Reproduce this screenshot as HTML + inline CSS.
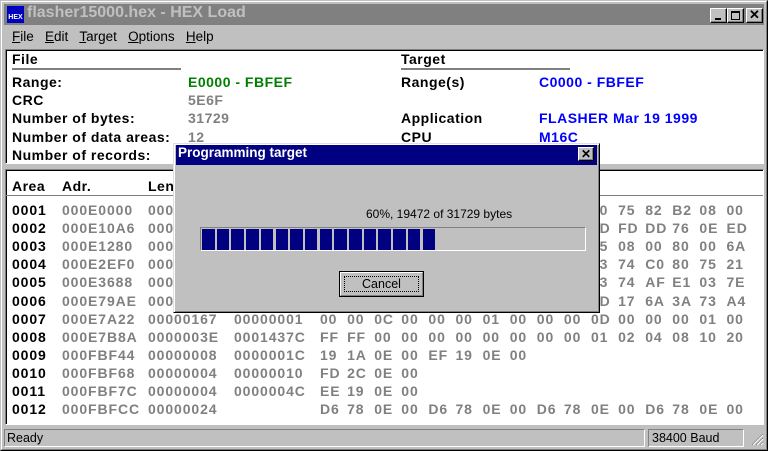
<!DOCTYPE html>
<html><head><meta charset="utf-8">
<style>
*{margin:0;padding:0;box-sizing:border-box}
body{width:768px;height:451px;background:#c0c0c0;font-family:"Liberation Sans",Arial,sans-serif;position:relative;overflow:hidden}
.a{position:absolute;white-space:nowrap}
.b{font-weight:bold;font-size:14px;letter-spacing:0.5px}
.g{color:#808080}
.gr{color:#008000}
.bl{color:#0000ff}
.btn{position:absolute;background:#c0c0c0;border:1px solid;border-color:#fff #000 #000 #fff;box-shadow:inset -1px -1px #808080}
.row{position:absolute;left:0;height:18px;font-weight:bold;font-size:14px;letter-spacing:0.9px;white-space:nowrap}
.row span{position:absolute;top:0}
</style></head><body>
<div class="a" style="left:0;top:0;width:768px;height:451px;border:1px solid;border-color:#c0c0c0 #000 #000 #c0c0c0"></div>
<div class="a" style="left:1px;top:1px;width:766px;height:449px;border:1px solid;border-color:#fff #808080 #808080 #fff"></div>
<div class="a" style="left:4px;top:4px;width:760px;height:21px;background:#808080"></div>
<div class="a" style="left:7px;top:6px;width:17px;height:17px;background:#0000c0;color:#fff;font-size:7px;font-weight:bold;text-align:center;line-height:24px">HEX</div>
<div class="a" style="left:27px;top:4px;font-size:16px;font-weight:bold;color:#c0c0c0">flasher15000.hex - HEX Load</div>
<div class="btn" style="left:710px;top:8px;width:17px;height:15px"><div class="a" style="left:4px;top:9px;width:6px;height:2px;background:#000"></div></div>
<div class="btn" style="left:727px;top:8px;width:17px;height:15px"><div class="a" style="left:3px;top:2px;width:9px;height:9px;border:1px solid #000;border-top-width:2px"></div></div>
<div class="btn" style="left:746px;top:8px;width:17px;height:15px;font-size:13px;font-weight:bold;text-align:center;line-height:12px">✕</div>
<div class="a" style="left:12px;top:29px;font-size:13.5px"><u>F</u>ile&nbsp;&nbsp; <u>E</u>dit&nbsp;&nbsp; <u>T</u>arget&nbsp;&nbsp; <u>O</u>ptions&nbsp;&nbsp; <u>H</u>elp</div>
<div class="a" style="left:5px;top:49px;width:759px;height:115px;background:#fff;border:1px solid;border-color:#808080 #fff #fff #808080;box-shadow:inset 1px 1px #000"></div>
<div class="a b" style="left:12px;top:51px">File</div>
<div class="a" style="left:12px;top:68px;width:169px;height:2px;background:#808080"></div>
<div class="a b" style="left:401px;top:51px">Target</div>
<div class="a" style="left:401px;top:68px;width:169px;height:2px;background:#808080"></div>
<div class="a b" style="left:12px;top:73px;line-height:18.2px">Range:<br>CRC<br>Number of bytes:<br>Number of data areas:<br>Number of records:</div>
<div class="a b" style="left:188px;top:73px;line-height:18.2px"><span class="gr">E0000 - FBFEF</span><br><span class="g">5E6F</span><br><span class="g">31729</span><br><span class="g">12</span><br><span class="g">12</span></div>
<div class="a b" style="left:401px;top:73px;line-height:18.2px">Range(s)<br>&nbsp;<br>Application<br>CPU</div>
<div class="a b bl" style="left:539px;top:73px;line-height:18.2px">C0000 - FBFEF<br>&nbsp;<br>FLASHER Mar 19 1999<br>M16C<br>38400</div>
<div class="a" style="left:5px;top:169px;width:759px;height:256px;background:#fff;border:1px solid;border-color:#808080 #fff #fff #808080;box-shadow:inset 1px 1px #000"></div>
<div class="a" style="left:6px;top:195px;width:757px;height:1px;background:#808080"></div>
<div class="a b" style="left:12px;top:178px">Area</div>
<div class="a b" style="left:62px;top:178px">Adr.</div>
<div class="a b" style="left:148px;top:178px">Length</div>
<div id="rows"></div>
<div class="a" style="left:4px;top:429px;width:641px;height:18px;border:1px solid;border-color:#808080 #fff #fff #808080;font-size:12.5px;padding-left:2px;line-height:16px">Ready</div>
<div class="a" style="left:648px;top:429px;width:96px;height:18px;border:1px solid;border-color:#808080 #fff #fff #808080;font-size:12.5px;padding-left:3px;line-height:16px">38400 Baud</div>
<svg class="a" style="left:750px;top:432px" width="14" height="14"><path d="M13 2L2 13M13 6L6 13M13 10L10 13" stroke="#808080" stroke-width="1"/><path d="M13 3L3 13M13 7L7 13M13 11L11 13" stroke="#fff" stroke-width="1"/></svg>
<div class="a" style="left:173px;top:143px;width:427px;height:170px;background:#c0c0c0;border:1px solid;border-color:#dfdfdf #000 #000 #dfdfdf;box-shadow:inset 1px 1px #fff,inset -1px -1px #808080"></div>
<div class="a" style="left:176px;top:145px;width:421px;height:20px;background:#000080"></div>
<div class="a" style="left:178px;top:145px;font-size:13.5px;font-weight:bold;color:#fff">Programming target</div>
<div class="btn" style="left:578px;top:147px;width:16px;height:14px;font-size:12px;font-weight:bold;text-align:center;line-height:12px">✕</div>
<div class="a" style="left:366px;top:207px;font-size:12px">60%, 19472 of 31729 bytes</div>
<div class="a" style="left:200px;top:227px;width:386px;height:24px;border:1px solid;border-color:#808080 #fff #fff #808080"></div>
<div id="blk"></div>
<div class="a" style="left:339px;top:271px;width:85px;height:26px;border:1px solid #000;background:#c0c0c0"><div class="a" style="left:0;top:0;width:83px;height:24px;border:1px solid;border-color:#fff #808080 #808080 #fff"></div><div class="a" style="left:4px;top:4px;width:75px;height:16px;border:1px dotted #000;font-size:12.5px;text-align:center;line-height:14px">Cancel</div></div>
<script>
var R=[
["0001","000E0000","000000A6","00000001","02 FC 00 F6 FD 00 40 F3 00 00 00 75 82 B2 08 00".split(" ")],
["0002","000E10A6","000001DA","00000002","00 00 00 00 00 00 00 00 00 00 0D FD DD 76 0E ED".split(" ")],
["0003","000E1280","00001C70","00000003","00 00 00 00 00 00 00 00 00 00 75 08 00 80 00 6A".split(" ")],
["0004","000E2EF0","00000798","00000004","00 00 00 00 00 00 00 00 00 00 73 74 C0 80 75 21".split(" ")],
["0005","000E3688","00004326","00000005","00 00 00 00 00 00 00 00 00 00 73 74 AF E1 03 7E".split(" ")],
["0006","000E79AE","00000074","00000006","00 00 00 00 00 00 00 00 00 00 0D 17 6A 3A 73 A4".split(" ")],
["0007","000E7A22","00000167","00000001","00 00 0C 00 00 00 01 00 00 00 0D 00 00 00 01 00".split(" ")],
["0008","000E7B8A","0000003E","0001437C","FF FF 00 00 00 00 00 00 00 00 01 02 04 08 10 20".split(" ")],
["0009","000FBF44","00000008","0000001C","19 1A 0E 00 EF 19 0E 00".split(" ")],
["0010","000FBF68","00000004","00000010","FD 2C 0E 00".split(" ")],
["0011","000FBF7C","00000004","0000004C","EE 19 0E 00".split(" ")],
["0012","000FBFCC","00000024","","D6 78 0E 00 D6 78 0E 00 D6 78 0E 00 D6 78 0E 00".split(" ")]];
var h="";
R.forEach(function(r,i){var t=202+i*18.1;h+='<div class="row" style="top:'+t+'px"><span style="left:12px">'+r[0]+'</span><span class="g" style="left:62px">'+r[1]+'</span><span class="g" style="left:148px">'+r[2]+'</span><span class="g" style="left:234px">'+r[3]+'</span>';
var b=r[4];
for(var j=0;j<b.length;j++){h+='<span class="g" style="left:'+(320+j*27.1)+'px">'+b[j]+'</span>';}
h+='</div>';});
document.getElementById('rows').innerHTML=h;
var k="";for(var i=0;i<16;i++){k+='<div class="a" style="left:'+(202+i*14.7)+'px;top:229px;width:12.5px;height:21px;background:#000080"></div>';}
document.getElementById('blk').innerHTML=k;
</script>
</body></html>
